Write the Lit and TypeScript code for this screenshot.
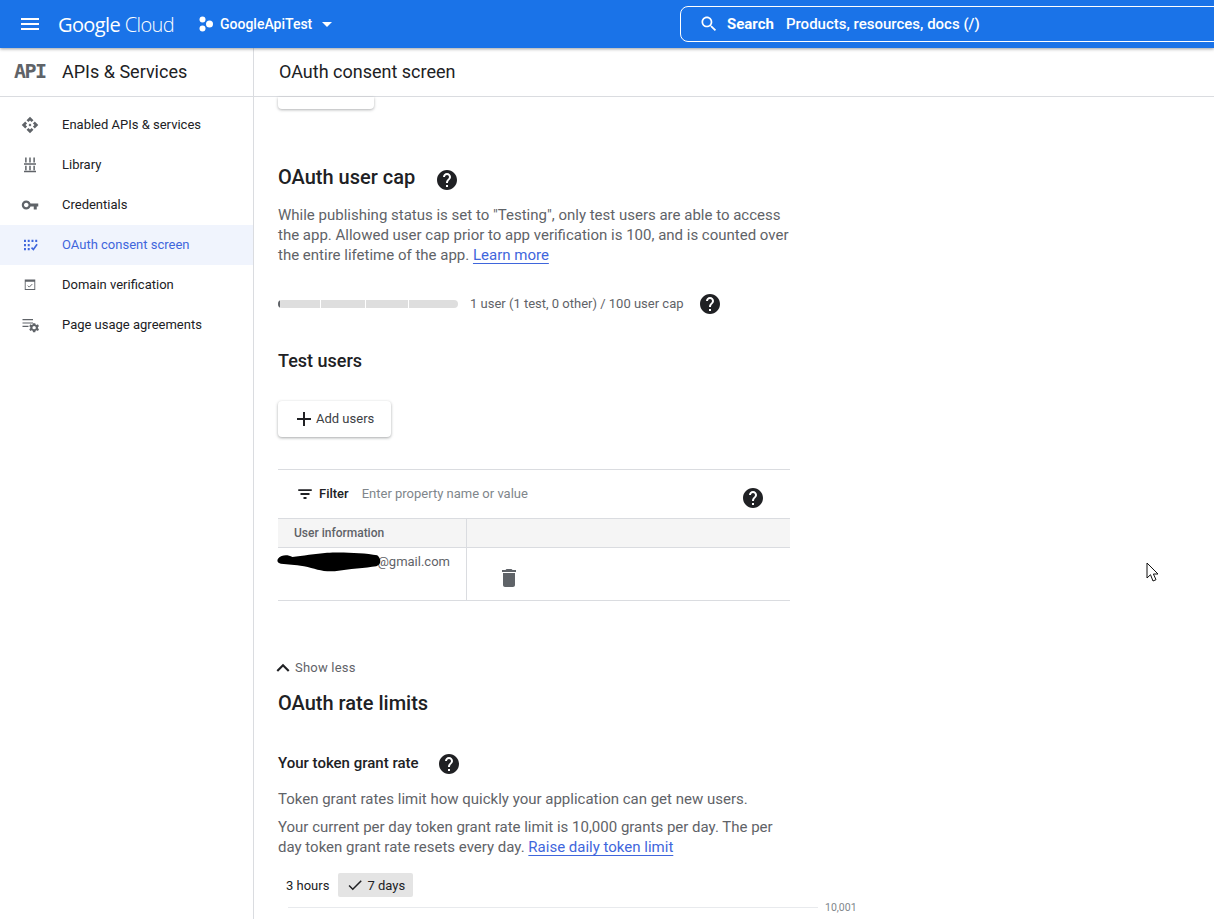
import { LitElement, html, css, svg } from 'lit';
import { customElement } from 'lit/decorators.js';

const ICON = {
  menu: 'M3 18h18v-2H3v2zm0-5h18v-2H3v2zm0-7v2h18V6H3z',
  drop: 'M7 10l5 5 5-5z',
  search:
    'M15.5 14h-.79l-.28-.27C15.41 12.59 16 11.11 16 9.5 16 5.91 13.09 3 9.5 3S3 5.91 3 9.5 5.91 16 9.5 16c1.61 0 3.09-.59 4.23-1.57l.27.28v.79l5 4.99L20.49 19l-4.99-5zm-6 0C7.01 14 5 11.99 5 9.5S7.01 5 9.5 5 14 7.01 14 9.5 11.99 14 9.5 14z',
  api: 'M14 12l-2 2-2-2 2-2 2 2zm-2-6l2.12 2.12 2.5-2.5L12 1 7.38 5.62l2.5 2.5L12 6zm-6 6l2.12-2.12-2.5-2.5L1 12l4.62 4.62 2.5-2.5L6 12zm12 0l-2.12 2.12 2.5 2.5L23 12l-4.62-4.62-2.5 2.5L18 12zm-6 6l-2.12-2.12-2.5 2.5L12 23l4.62-4.62-2.5-2.5L12 18z',
  key: 'M12.65 10C11.83 7.67 9.61 6 7 6c-3.31 0-6 2.69-6 6s2.69 6 6 6c2.61 0 4.83-1.67 5.65-4H17v4h4v-4h2v-4H12.65zM7 15c-1.66 0-3-1.34-3-3s1.34-3 3-3 3 1.34 3 3-1.34 3-3 3z',
  help: 'M12 2C6.48 2 2 6.48 2 12s4.48 10 10 10 10-4.48 10-10S17.52 2 12 2zm1 17h-2v-2h2v2zm2.07-7.75l-.9.92C13.45 12.9 13 13.5 13 15h-2v-.5c0-1.1.45-2.1 1.17-2.83l1.24-1.26c.37-.36.59-.86.59-1.41 0-1.1-.9-2-2-2s-2 .9-2 2H8c0-2.21 1.79-4 4-4s4 1.79 4 4c0 .88-.36 1.68-.93 2.25z',
  add: 'M19 13h-6v6h-2v-6H5v-2h6V5h2v6h6v2z',
  filter: 'M10 18.500h4v-2.600h-4zM3 5.500v2.600h18V5.500zM6 13.300h12v-2.600H6z',
  trash: 'M6 19c0 1.1.9 2 2 2h8c1.1 0 2-.9 2-2V7H6v12zM19 4h-3.5l-1-1h-5l-1 1H5v2h14V4z',
  less: 'M12 8l-6 6 1.41 1.41L12 10.83l4.59 4.58L18 14z',
  check: 'M9 16.17L4.83 12l-1.42 1.41L9 19 21 7l-1.41-1.41z',
};

const icon = (d: string, size = 24, cls = '') =>
  html`<svg class=${cls} width=${size} height=${size} viewBox="0 0 24 24" fill="currentColor"><path d=${d}></path></svg>`;

const libraryIcon = svg`
  <path d="M5.500 2h2v6.500h-2zM11 2h2v6.500h-2zM16.500 2h2v6.500h-2zM4 9.500h16v2H4zM5.500 13h2v6h-2zM11 13h2v6h-2zM16.500 13h2v6h-2zM4 19.500h16v2H4z"></path>`;
const oauthIcon = svg`
  <path d="M4 5h2.600v3H4zM9 5h2.600v3H9zM14 5h2.600v3H14zM19 5h2.600v3H19zM4 10.500h2.600v3H4zM4 16h2.600v3H4zM9 16h2.600v3H9zM9 10.500h2.600v3H9z"></path>
  <path d="M14 15.500l2.500 2.500 5-7" fill="none" stroke="currentColor" stroke-width="2.200"></path>`;
const domainIcon = svg`
  <path d="M5 4.500h14v14H5zM6.200 7.500v9.800h11.600V7.500z" fill-rule="evenodd"></path>
  <path d="M9 12.800l2 2 4-4" fill="none" stroke="currentColor" stroke-width="1.300"></path>`;
const usageIcon = svg`
  <path d="M2 4h14v1.500H2zM2 8.500h14V10H2zM2 13h8v1.500H2z"></path>
  <path fill-rule="evenodd" d="M16 9.500h3l.4 1.900 1.500.7 1.700-1 1.400 2.400-1.400 1.300v1.400l1.400 1.300-1.400 2.400-1.700-1-1.500.7-.4 1.900h-3l-.4-1.900-1.500-.7-1.700 1-1.400-2.400 1.400-1.300v-1.400l-1.400-1.300 1.400-2.400 1.700 1 1.500-.7zM17.500 13.200a2.300 2.300 0 1 0 0 4.600 2.300 2.300 0 0 0 0-4.600z"></path>`;

const NAV = [
  { label: 'Enabled APIs & services', glyph: svg`<path d=${ICON.api}></path>` },
  { label: 'Library', glyph: libraryIcon },
  { label: 'Credentials', glyph: svg`<path d=${ICON.key}></path>` },
  { label: 'OAuth consent screen', glyph: oauthIcon, active: true },
  { label: 'Domain verification', glyph: domainIcon },
  { label: 'Page usage agreements', glyph: usageIcon },
];

@customElement('app-root')
export class AppRoot extends LitElement {
  static styles = css`
    :host {
      display: block;
      position: relative;
      height: 919px;
      overflow: hidden;
      background: #fff;
      color: #202124;
      font-family: Roboto, 'Liberation Sans', sans-serif;
      font-size: 14px;
    }

    /* top bar */
    .topbar {
      position: relative;
      z-index: 2;
      display: flex;
      align-items: center;
      height: 48px;
      background: #1a73e8;
      color: #fff;
      overflow: hidden;
      box-shadow: 0 1px 3px rgba(60, 64, 67, 0.5);
    }
    .bar-left {
      flex: 0 0 680px;
      display: flex;
      align-items: center;
      padding-left: 18px;
      box-sizing: border-box;
    }
    .logo {
      margin-left: 16px;
      font-family: 'Open Sans', sans-serif;
      font-size: 20px;
      letter-spacing: -0.6px;
      white-space: nowrap;
      width: 141px;
    }
    .logo span {
      font-weight: 300;
    }
    .project-dots {
      flex: none;
      margin-right: 7px;
    }
    .project {
      font-weight: 500;
      font-size: 14px;
    }
    .drop {
      margin-left: 3px;
    }
    .search {
      flex: 0 0 560px;
      box-sizing: border-box;
      height: 36px;
      margin-top: -1px;
      border: 1px solid #fff;
      border-radius: 8px;
      display: flex;
      align-items: center;
      padding-left: 18px;
      font-size: 15px;
    }
    .search b {
      font-weight: 700;
      margin: 0 12px 0 8px;
    }
    .search span {
      font-weight: 500;
    }

    .body {
      display: flex;
      height: 871px;
    }

    /* side navigation */
    .side {
      flex: 0 0 254px;
      box-sizing: border-box;
      border-right: 1px solid #dadce0;
    }
    .page-head {
      box-sizing: border-box;
      height: 49px;
      padding-bottom: 2px;
      border-bottom: 1px solid #dadce0;
      display: flex;
      align-items: center;
      font-size: 18px;
    }
    .side .page-head {
      padding-left: 14px;
    }
    .api-mark {
      width: 48px;
      font-family: 'DejaVu Sans Mono', monospace;
      font-weight: 700;
      font-size: 20px;
      letter-spacing: -1.5px;
      color: #5f6368;
    }
    .nav {
      padding-top: 8px;
    }
    .nav-item {
      display: flex;
      align-items: center;
      height: 40px;
      font-size: 13px;
      color: #202124;
    }
    .nav-item span {
      margin-bottom: 2px;
    }
    .nav-item svg {
      margin: 0 23px 0 21px;
      color: #5f6368;
    }
    .nav-item.active {
      background: #f0f4fd;
      color: #3f66dc;
    }
    .nav-item.active svg {
      color: #3f66dc;
    }

    /* main column */
    .main {
      flex: 1;
      min-width: 0;
    }
    .main .page-head {
      padding-left: 25px;
    }
    .content {
      width: 512px;
      padding-left: 24px;
    }
    .cut-btn {
      width: 96px;
      height: 12px;
      border-radius: 0 0 4px 4px;
      box-shadow: 0 1px 3px rgba(60, 64, 67, 0.4);
    }
    .title-row {
      display: flex;
      align-items: flex-start;
    }
    h2 {
      margin: 0;
      font-size: 20px;
      line-height: 24px;
      font-weight: 500;
    }
    h3 {
      margin: 0;
      font-size: 18px;
      line-height: 24px;
      font-weight: 500;
    }
    h4 {
      margin: 0;
      font-size: 15px;
      line-height: 20px;
      font-weight: 500;
    }
    .cap-title {
      margin-top: 56px;
    }
    .help {
      display: block;
      flex: none;
      color: #202124;
    }
    .cap-title .help {
      margin: 3px 0 0 20px;
    }
    p {
      margin: 0;
      font-size: 15px;
      line-height: 20px;
      color: #5f6368;
    }
    .cap-text {
      margin-top: 13px;
    }
    a {
      color: #3f66dc;
      text-decoration: underline;
      text-underline-offset: 3px;
      text-decoration-thickness: 1px;
    }
    .usage {
      display: flex;
      align-items: center;
      height: 24px;
      margin-top: 27px;
      font-size: 13px;
      color: #5f6368;
    }
    .usage span {
      margin-bottom: 2px;
    }
    .meter {
      position: relative;
      width: 180px;
      height: 8px;
      margin-right: 12px;
      border-radius: 4px;
      overflow: hidden;
      display: grid;
      grid-template-columns: 42px 44px 42px 1fr;
      column-gap: 1px;
    }
    .meter i {
      background: #dedede;
    }
    .meter::before {
      content: '';
      position: absolute;
      left: 0;
      top: 0;
      bottom: 0;
      width: 2px;
      background: #5f6368;
    }
    .usage .help {
      margin-left: 14px;
    }
    .test-title {
      margin-top: 33px;
    }
    .add-btn {
      display: flex;
      align-items: center;
      box-sizing: border-box;
      width: 113px;
      height: 36px;
      margin-top: 28px;
      padding-left: 14px;
      border-radius: 4px;
      font-size: 13px;
      color: #3c4043;
      box-shadow: 0 1px 3px rgba(60, 64, 67, 0.45);
    }
    .add-btn svg {
      color: #202124;
    }
    .add-btn span {
      margin-bottom: 2px;
    }

    /* users table */
    .table {
      margin-top: 32px;
      border-top: 1px solid #dadce0;
    }
    .filter {
      display: flex;
      align-items: center;
      height: 48px;
      padding-left: 18px;
      font-size: 13px;
    }
    .filter b {
      font-weight: 500;
      margin: 0 13px 2px 5px;
    }
    .filter span {
      color: #80868b;
      font-size: 13px;
      margin-bottom: 2px;
    }
    .filter .help {
      margin: 8px 25px 0 auto;
    }
    .thead,
    .tr {
      display: grid;
      grid-template-columns: 189px 1fr;
    }
    .thead {
      height: 30px;
      box-sizing: border-box;
      background: #f5f5f5;
      border-top: 1px solid #dadce0;
      border-bottom: 1px solid #dadce0;
      font-size: 12px;
      font-weight: 500;
      line-height: 28px;
      color: #5f6368;
    }
    .thead > div:first-child {
      padding-left: 16px;
      border-right: 1px solid #dadce0;
    }
    .tr {
      height: 53px;
      box-sizing: border-box;
      border-bottom: 1px solid #dadce0;
      font-size: 13px;
      color: #5f6368;
    }
    .email {
      position: relative;
      border-right: 1px solid #dadce0;
      padding: 5px 16px 0 0;
      line-height: 18px;
      text-align: right;
    }
    .blot {
      position: absolute;
      left: -1px;
      top: 4px;
    }
    .actions {
      padding: 18px 0 0 30px;
      color: #5f6368;
    }

    .less {
      display: flex;
      align-items: center;
      height: 26px;
      margin: 54px 0 0 -8px;
      font-size: 13px;
      letter-spacing: 0.2px;
      color: #5f6368;
    }
    .less svg {
      color: #202124;
    }
    .less span {
      margin: 0 0 2px -1px;
    }
    .rate-title {
      margin-top: 10px;
    }
    .grant-title {
      margin-top: 35px;
      align-items: center;
    }
    .grant-title .help {
      margin: 2px 0 0 18px;
    }
    .grant-a {
      margin-top: 13px;
    }
    .grant-b {
      margin-top: 8px;
    }
    .range {
      display: flex;
      align-items: center;
      height: 24px;
      margin-top: 16px;
      padding-left: 8px;
      font-size: 13px;
    }
    .chip {
      display: flex;
      align-items: center;
      box-sizing: border-box;
      height: 24px;
      width: 75px;
      margin-left: 9px;
      padding-left: 8px;
      background: #e4e4e4;
      border-radius: 2px;
    }
    .chip svg {
      margin-right: 3px;
    }
    .axis {
      display: flex;
      align-items: center;
      width: 600px;
      height: 14px;
      margin-top: 3px;
      padding-left: 10px;
      font-size: 10.500px;
      color: #80868b;
    }
    .axis i {
      width: 530px;
      height: 1px;
      margin-right: 7px;
      background: #e8eaed;
    }

    .cursor {
      position: absolute;
      left: 1146px;
      top: 562px;
    }
  `;

  render() {
    return html`
      <div class="topbar">
        <div class="bar-left">
          ${icon(ICON.menu)}
          <div class="logo">Google <span>Cloud</span></div>
          <svg class="project-dots" width="14" height="16" viewBox="0 0 14 16" fill="currentColor">
            <circle cx="3.500" cy="3.500" r="3"></circle>
            <circle cx="3.500" cy="12.500" r="3"></circle>
            <circle cx="10.500" cy="8" r="3.500"></circle>
          </svg>
          <span class="project">GoogleApiTest</span>
          ${icon(ICON.drop, 24, 'drop')}
        </div>
        <div class="search">
          ${icon(ICON.search, 20)}
          <b>Search</b><span>Products, resources, docs (/)</span>
        </div>
      </div>

      <div class="body">
        <aside class="side">
          <div class="page-head"><span class="api-mark">API</span>APIs &amp; Services</div>
          <nav class="nav">
            ${NAV.map(
              (item) => html`
                <div class="nav-item ${item.active ? 'active' : ''}">
                  <svg width="18" height="18" viewBox="0 0 24 24" fill="currentColor">${item.glyph}</svg>
                  <span>${item.label}</span>
                </div>
              `
            )}
          </nav>
        </aside>

        <main class="main">
          <div class="page-head">OAuth consent screen</div>
          <div class="content">
            <div class="cut-btn"></div>

            <div class="title-row cap-title">
              <h2>OAuth user cap</h2>
              ${icon(ICON.help, 24, 'help')}
            </div>
            <p class="cap-text">
              While publishing status is set to "Testing", only test users are able to access the app. Allowed user cap
              prior to app verification is 100, and is counted over the entire lifetime of the app.
              <a>Learn more</a>
            </p>
            <div class="usage">
              <div class="meter"><i></i><i></i><i></i><i></i></div>
              <span>1 user (1 test, 0 other) / 100 user cap</span>
              ${icon(ICON.help, 24, 'help')}
            </div>

            <h3 class="test-title">Test users</h3>
            <div class="add-btn">${icon(ICON.add)}<span>Add users</span></div>

            <div class="table">
              <div class="filter">
                ${icon(ICON.filter, 18)}
                <b>Filter</b><span>Enter property name or value</span>
                ${icon(ICON.help, 24, 'help')}
              </div>
              <div class="thead"><div>User information</div><div></div></div>
              <div class="tr">
                <div class="email">
                  @gmail.com
                  <svg class="blot" width="106" height="20" viewBox="0 0 110 24" preserveAspectRatio="none">
                    <path d="M1 8C5 3 11 3 16 6 26 5 40 2 52 1 66 0 90 1 104 4 108 8 109 15 103 17 92 19 75 20 60 23 47 24 40 20 28 17 18 15 12 15 4 14 0 13 0 10 1 8z"></path>
                  </svg>
                </div>
                <div class="actions">${icon(ICON.trash)}</div>
              </div>
            </div>

            <div class="less">${icon(ICON.less, 26)}<span>Show less</span></div>

            <h2 class="rate-title">OAuth rate limits</h2>

            <div class="title-row grant-title">
              <h4>Your token grant rate</h4>
              ${icon(ICON.help, 24, 'help')}
            </div>
            <p class="grant-a">Token grant rates limit how quickly your application can get new users.</p>
            <p class="grant-b">
              Your current per day token grant rate limit is 10,000 grants per day. The per day token grant rate resets
              every day. <a>Raise daily token limit</a>
            </p>

            <div class="range">
              3 hours
              <div class="chip">${icon(ICON.check, 18)}7 days</div>
            </div>
            <div class="axis"><i></i>10,001</div>
          </div>
        </main>
      </div>

      <svg class="cursor" width="14" height="21" viewBox="0 0 14 21">
        <path d="M1 1v15l3.500-3.300L7 19l3-1.300-2.600-5.700H12z" fill="#fff" stroke="#111" stroke-width="1"></path>
      </svg>
    `;
  }
}
